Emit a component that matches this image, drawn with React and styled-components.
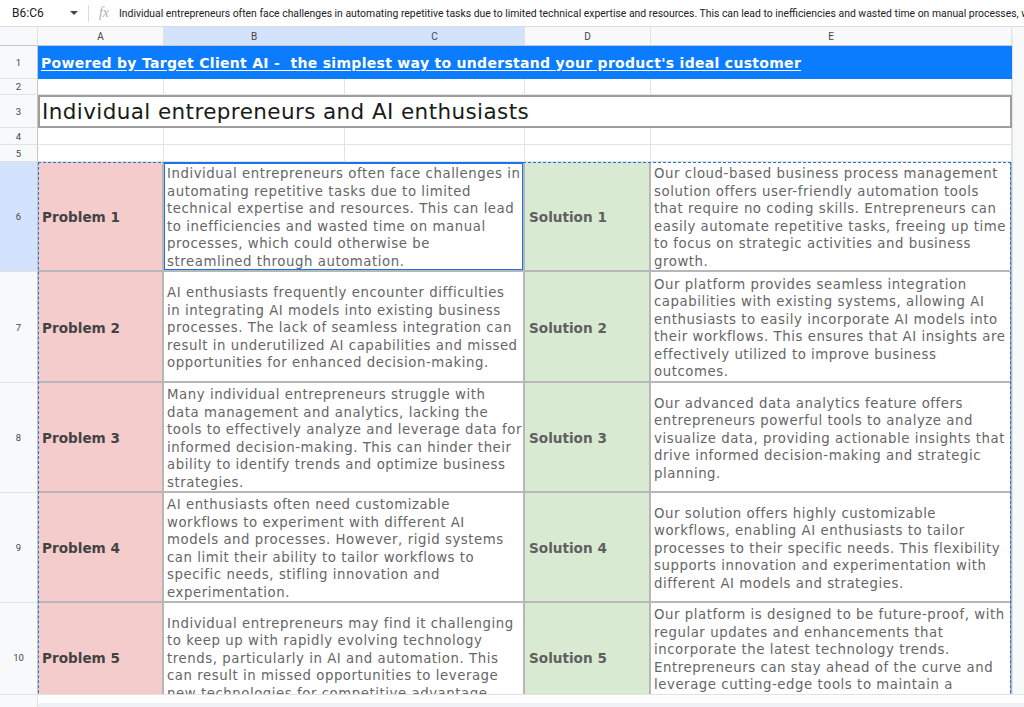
import React from 'react';
import styled, {createGlobalStyle, css} from 'styled-components';

const GlobalStyle = createGlobalStyle`
    html, body {
        margin: 0;
        padding: 0;
        background: #ffffff;
        overflow: hidden;
    }
    * {
        box-sizing: border-box;
    }
`;

const COLS = {head: 38, a: 126, b: 181, c: 180, d: 126, e: 361};
const BODY_FONT = `"DejaVu Sans", "Open Sans", sans-serif`;

const Page = styled.div`
    width: 1024px;
    height: 707px;
    display: flex;
    flex-direction: column;
    overflow: hidden;
    font-family: Roboto, "Liberation Sans", sans-serif;
`;

const FormulaBar = styled.div`
    height: 27px;
    flex: none;
    display: flex;
    align-items: center;
    border-bottom: 1px solid #dadce0;
    background: #ffffff;
`;

const NameBox = styled.div`
    width: 88px;
    height: 100%;
    display: flex;
    align-items: center;
    justify-content: space-between;
    padding: 0 10px 0 12px;
    font-size: 12px;
    color: #202124;
`;

const Caret = styled.span`
    width: 0;
    height: 0;
    border-left: 4px solid transparent;
    border-right: 4px solid transparent;
    border-top: 4px solid #444746;
`;

const Divider = styled.span`
    width: 1px;
    height: 17px;
    background: #dadce0;
`;

const Fx = styled.span`
    width: 30px;
    text-align: center;
    font-family: "Liberation Serif", serif;
    font-style: italic;
    font-size: 14px;
    color: #b0b0b0;
`;

const FormulaText = styled.div`
    flex: 1;
    white-space: nowrap;
    overflow: hidden;
    font-size: 10.4px;
    color: #202124;
`;

const Body = styled.div`
    flex: 1;
    display: flex;
    min-height: 0;
`;

const Grid = styled.div`
    width: ${COLS.head + COLS.a + COLS.b + COLS.c + COLS.d + COLS.e}px;
    flex: none;
    overflow: hidden;
    display: flex;
    flex-direction: column;
`;

const ScrollTrack = styled.div`
    flex: 1;
    background: #f8f9fa;
    border-left: 1px solid #e3e3e3;
    border-top: 19px solid #f8f9fa;
`;

const Row = styled.div`
    height: ${p => p.h}px;
    flex: none;
    display: flex;
`;

const ColHead = styled.div`
    width: ${p => p.w}px;
    flex: none;
    display: flex;
    align-items: center;
    justify-content: center;
    font-size: 10px;
    color: #444746;
    background: ${p => (p.selected ? '#d3e3fd' : '#f8f9fa')};
    border-right: 1px solid #e1e3e1;
    border-bottom: 1px solid #c4c7c5;
`;

const RowNum = styled.div`
    width: ${COLS.head}px;
    flex: none;
    display: flex;
    align-items: center;
    justify-content: center;
    font-size: 9.5px;
    color: #444746;
    background: ${p => (p.selected ? '#d3e3fd' : '#f8f9fa')};
    border-right: 1px solid #c4c7c5;
    border-bottom: 1px solid #e1e3e1;
`;

const EmptyCell = styled.div`
    width: ${p => p.w}px;
    flex: none;
    border-right: 1px solid #e2e3e3;
    border-bottom: 1px solid #e2e3e3;
`;

const Banner = styled.div`
    flex: 1;
    display: flex;
    align-items: center;
    padding-left: 3px;
    background: #0b7cfd;
    font-family: ${BODY_FONT};
    font-weight: bold;
    font-size: 14px;
    letter-spacing: 0.3px;
    color: #ffffff;
    white-space: pre;
    overflow: hidden;

    a {
        color: inherit;
        text-decoration: underline;
        text-underline-offset: 2px;
    }
`;

const TitleCell = styled.div`
    flex: 1;
    display: flex;
    align-items: center;
    padding-left: 2px;
    border: 2px solid #9e9e9e;
    font-family: ${BODY_FONT};
    font-weight: normal;
    font-size: 21.5px;
    letter-spacing: 0.4px;
    color: #1a1a1a;
    white-space: nowrap;
`;

const DataBlock = styled.div`
    position: relative;
    display: flex;
    flex-direction: column;

    &::after {
        content: '';
        position: absolute;
        top: 0;
        left: ${COLS.head}px;
        right: 1px;
        bottom: -40px;
        border: 1.5px dashed #1a73e8;
        pointer-events: none;
    }
`;

const LabelCell = styled.div`
    width: ${p => p.w}px;
    flex: none;
    display: flex;
    align-items: center;
    padding: 2px 0 0 4px;
    background: ${p => (p.kind === 'problem' ? '#f4cccc' : '#d9ead3')};
    border-right: 2px solid #b7b7b7;
    border-bottom: 2px solid #b7b7b7;
    font-family: ${BODY_FONT};
    font-weight: bold;
    font-size: 13.6px;
    color: ${p => (p.kind === 'problem' ? '#434343' : '#5f5f5f')};
`;

const TextCell = styled.div`
    position: relative;
    width: ${p => p.w}px;
    flex: none;
    display: flex;
    flex-direction: column;
    justify-content: center;
    padding: 3px 0 0 3px;
    overflow: hidden;
    border-right: 2px solid #b7b7b7;
    border-bottom: 2px solid #b7b7b7;
    font-family: ${BODY_FONT};
    font-size: 13.3px;
    letter-spacing: 0.55px;
    line-height: 17.5px;
    color: #666666;

    ${p => p.selected && css`
        &::after {
            content: '';
            position: absolute;
            inset: 0 -1px -1px -1px;
            border: 2px solid #1a73e8;
            pointer-events: none;
        }
    `}
`;

const Line = styled.span`
    display: block;
    white-space: nowrap;
`;

const BottomBar = styled.div`
    height: 13px;
    flex: none;
    display: flex;
    border-top: 1px solid #e1e3e1;
`;

const BottomHead = styled.div`
    width: ${COLS.head}px;
    background: #f8f9fa;
    border-right: 1px solid #e1e3e1;
`;

const BottomRest = styled.div`
    flex: 1;
    background: #ffffff;
    border-bottom: 4px solid #eef1f6;
`;

const formula = 'Individual entrepreneurs often face challenges in automating repetitive tasks due to limited technical expertise and resources. This can lead to inefficiencies and wasted time on manual processes, which could otherwise be streamlined through automation.';

const rows = [
    {
        n: 6,
        problem: [
            'Individual entrepreneurs often face challenges in',
            'automating repetitive tasks due to limited',
            'technical expertise and resources. This can lead',
            'to inefficiencies and wasted time on manual',
            'processes, which could otherwise be',
            'streamlined through automation.',
        ],
        solution: [
            'Our cloud-based business process management',
            'solution offers user-friendly automation tools',
            'that require no coding skills. Entrepreneurs can',
            'easily automate repetitive tasks, freeing up time',
            'to focus on strategic activities and business',
            'growth.',
        ],
    },
    {
        n: 7,
        problem: [
            'AI enthusiasts frequently encounter difficulties',
            'in integrating AI models into existing business',
            'processes. The lack of seamless integration can',
            'result in underutilized AI capabilities and missed',
            'opportunities for enhanced decision-making.',
        ],
        solution: [
            'Our platform provides seamless integration',
            'capabilities with existing systems, allowing AI',
            'enthusiasts to easily incorporate AI models into',
            'their workflows. This ensures that AI insights are',
            'effectively utilized to improve business',
            'outcomes.',
        ],
    },
    {
        n: 8,
        problem: [
            'Many individual entrepreneurs struggle with',
            'data management and analytics, lacking the',
            'tools to effectively analyze and leverage data for',
            'informed decision-making. This can hinder their',
            'ability to identify trends and optimize business',
            'strategies.',
        ],
        solution: [
            'Our advanced data analytics feature offers',
            'entrepreneurs powerful tools to analyze and',
            'visualize data, providing actionable insights that',
            'drive informed decision-making and strategic',
            'planning.',
        ],
    },
    {
        n: 9,
        problem: [
            'AI enthusiasts often need customizable',
            'workflows to experiment with different AI',
            'models and processes. However, rigid systems',
            'can limit their ability to tailor workflows to',
            'specific needs, stifling innovation and',
            'experimentation.',
        ],
        solution: [
            'Our solution offers highly customizable',
            'workflows, enabling AI enthusiasts to tailor',
            'processes to their specific needs. This flexibility',
            'supports innovation and experimentation with',
            'different AI models and strategies.',
        ],
    },
    {
        n: 10,
        problem: [
            'Individual entrepreneurs may find it challenging',
            'to keep up with rapidly evolving technology',
            'trends, particularly in AI and automation. This',
            'can result in missed opportunities to leverage',
            'new technologies for competitive advantage.',
        ],
        solution: [
            'Our platform is designed to be future-proof, with',
            'regular updates and enhancements that',
            'incorporate the latest technology trends.',
            'Entrepreneurs can stay ahead of the curve and',
            'leverage cutting-edge tools to maintain a',
            'competitive edge.',
        ],
    },
];

const heights = {6: 110, 7: 111, 8: 110, 9: 110, 10: 110};

function Lines({lines}) {
    return lines.map((l, i) => <Line key={i}>{l}</Line>);
}

function EmptyRow({n, h}) {
    return (
        <Row h={h}>
            <RowNum>{n}</RowNum>
            <EmptyCell w={COLS.a}/>
            <EmptyCell w={COLS.b}/>
            <EmptyCell w={COLS.c}/>
            <EmptyCell w={COLS.d}/>
            <EmptyCell w={COLS.e}/>
        </Row>
    );
}

export default function App() {
    return (
        <Page>
            <GlobalStyle/>
            <FormulaBar>
                <NameBox>B6:C6<Caret/></NameBox>
                <Divider/>
                <Fx>fx</Fx>
                <FormulaText>{formula}</FormulaText>
            </FormulaBar>

            <Body>
                <Grid>
                    <Row h={19}>
                        <ColHead w={COLS.head}/>
                        <ColHead w={COLS.a}>A</ColHead>
                        <ColHead w={COLS.b} selected>B</ColHead>
                        <ColHead w={COLS.c} selected>C</ColHead>
                        <ColHead w={COLS.d}>D</ColHead>
                        <ColHead w={COLS.e}>E</ColHead>
                    </Row>
                    <Row h={33}>
                        <RowNum>1</RowNum>
                        <Banner><a>Powered by Target Client AI -  the simplest way to understand your product's ideal customer</a></Banner>
                    </Row>
                    <EmptyRow n={2} h={16}/>
                    <Row h={33}>
                        <RowNum>3</RowNum>
                        <TitleCell>Individual entrepreneurs and AI enthusiasts</TitleCell>
                    </Row>
                    <EmptyRow n={4} h={17}/>
                    <EmptyRow n={5} h={17}/>
                    <DataBlock>
                        {rows.map((r, i) => (
                            <Row key={r.n} h={heights[r.n]}>
                                <RowNum selected={r.n === 6}>{r.n}</RowNum>
                                <LabelCell w={COLS.a} kind="problem">Problem {i + 1}</LabelCell>
                                <TextCell w={COLS.b + COLS.c} selected={r.n === 6}><Lines lines={r.problem}/></TextCell>
                                <LabelCell w={COLS.d} kind="solution">Solution {i + 1}</LabelCell>
                                <TextCell w={COLS.e}><Lines lines={r.solution}/></TextCell>
                            </Row>
                        ))}
                    </DataBlock>
                </Grid>
                <ScrollTrack/>
            </Body>

            <BottomBar>
                <BottomHead/>
                <BottomRest/>
            </BottomBar>
        </Page>
    );
}
